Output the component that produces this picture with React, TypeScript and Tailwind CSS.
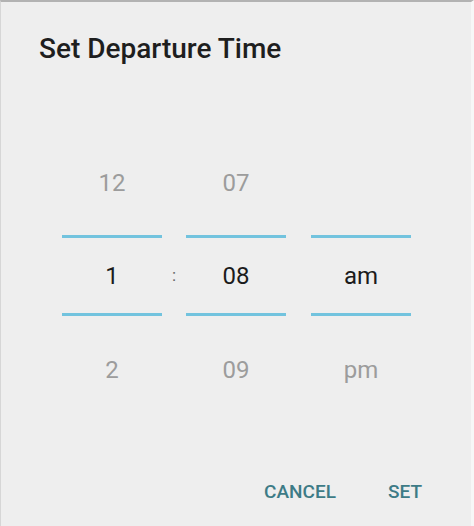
import React from "react";

const cols = [
  { top: "12", mid: "1", bot: "2" },
  { top: "07", mid: "08", bot: "09" },
  { top: "", mid: "am", bot: "pm" },
];

function Column({ top, mid, bot }: { top: string; mid: string; bot: string }) {
  return (
    <div className="flex w-[100px] flex-col items-stretch">
      <div className="flex h-[105px] items-center justify-center text-[24px] text-[#9c9c9c]">{top}</div>
      <div className="h-[3px] bg-[#72c3de]" />
      <div className="flex h-[75px] items-center justify-center text-[24px] text-[#1b1b1b]">{mid}</div>
      <div className="h-[3px] bg-[#72c3de]" />
      <div className="flex h-[108px] items-center justify-center text-[24px] text-[#9c9c9c]">{bot}</div>
    </div>
  );
}

export default function App() {
  return (
    <div
      className="flex h-[526px] w-[474px] flex-col border-l border-r-[3px] border-t-2 border-l-[#d6d6d6] border-r-[#f7f7f7] border-t-[#b2b2b2] bg-[#eeeeee]"
      style={{ fontFamily: "Roboto, 'Liberation Sans', sans-serif" }}
    >
      <div className="pl-[38px] pt-[33px] text-[28px] font-medium leading-[28px] text-[#1e1e1e]">
        Set Departure Time
      </div>
      <div className="mt-[67px] flex pl-[61px]">
        <Column {...cols[0]} />
        <div className="flex w-[24px] flex-col">
          <div className="h-[108px]" />
          <div className="flex h-[75px] items-center justify-center text-[17px] text-[#666666]">:</div>
        </div>
        <Column {...cols[1]} />
        <div className="w-[25px]" />
        <Column {...cols[2]} />
      </div>
      <div className="mt-[56px] flex justify-end gap-[52px] pr-[49px] text-[19px] font-medium leading-[24px] text-[#3d7b86]">
        <span>CANCEL</span>
        <span>SET</span>
      </div>
    </div>
  );
}
